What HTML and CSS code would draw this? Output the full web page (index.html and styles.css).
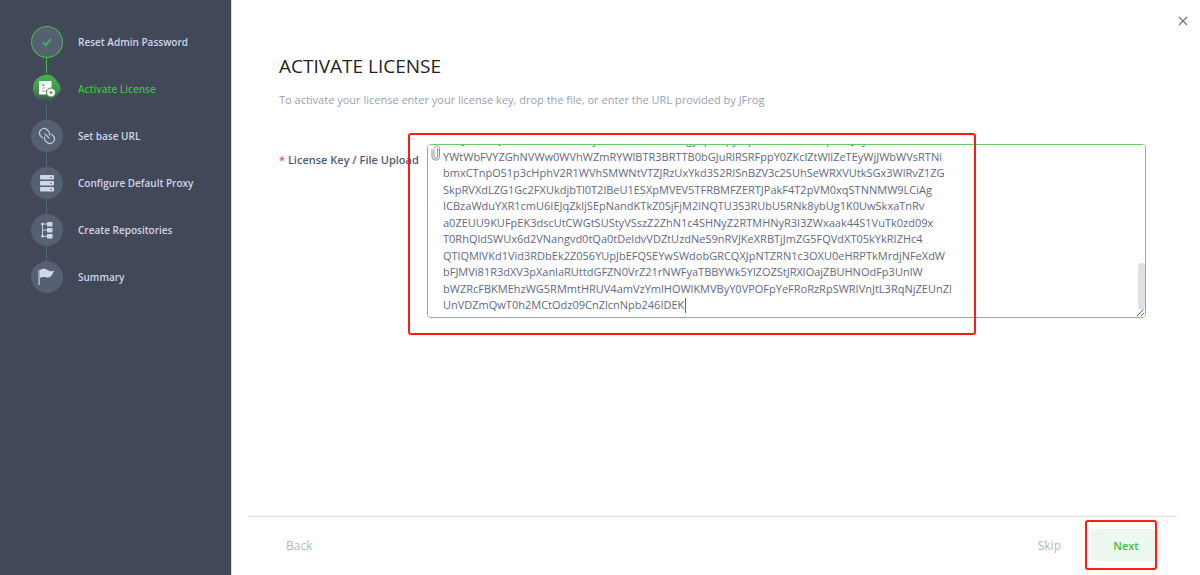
FILE: index.html
```html
<!DOCTYPE html>
<html lang="en">
<head>
    <meta charset="UTF-8">
    <meta name="viewport" content="width=device-width, initial-scale=1.0">
    <title>Activate License</title>
    <link rel="stylesheet" href="styles.css">
</head>
<body>
    <!-- Wizard steps -->
    <aside class="sidebar">
        <ol class="steps">
            <li class="step done">
                <span class="step-icon">
                    <svg width="32" height="32" viewBox="0 0 32 32"><path d="M12 16.500l2.800 2.800 5.200-6.300" fill="none" stroke="#40be46" stroke-width="1.700"/></svg>
                </span>
                <span class="step-name">Reset Admin Password</span>
            </li>
            <li class="step active">
                <span class="step-icon">
                    <svg width="32" height="32" viewBox="0 0 32 32">
                        <defs>
                            <linearGradient id="blob" x1="0" y1="0" x2="0" y2="1">
                                <stop offset="0" stop-color="#43b649"/>
                                <stop offset="0.5" stop-color="#439a4c"/>
                                <stop offset="1" stop-color="#414857"/>
                            </linearGradient>
                        </defs>
                        <path d="M14 2c6-1 9 2 12 6 4 5 5 8 2 12-4 5-8 10-14 9C6 28 2 23 2 15 2 8 7 3 14 2z" fill="url(#blob)"/>
                        <path d="M8 8h12.500v10l-4 3.500H8z" fill="#fff"/>
                        <path d="M11 18h5M11 15h3" stroke="#8fae91" stroke-width="1"/>
                        <circle cx="12.500" cy="12" r="1" fill="#439a4c"/>
                        <circle cx="20" cy="19.500" r="4.500" fill="#fff" stroke="#43814d" stroke-width="1"/>
                        <path d="M20 17.800v3.400M18.300 19.500h3.400" stroke="#43a04a" stroke-width="1.200"/>
                    </svg>
                </span>
                <span class="step-name">Activate License</span>
            </li>
            <li class="step">
                <span class="step-icon">
                    <svg width="32" height="32" viewBox="0 0 32 32" fill="none" stroke="#c5cbe3" stroke-width="1.200" stroke-linecap="round"><path d="M11.500 17.800l-2-2a4.500 4.500 0 0 1 6.300-6.300l1.700 1.700a4.500 4.500 0 0 1 1 4M20.500 14.200l2 2a4.500 4.500 0 0 1-6.300 6.300l-1.700-1.700a4.500 4.500 0 0 1-1-4M14 14l4 4"/></svg>
                </span>
                <span class="step-name">Set base URL</span>
            </li>
            <li class="step">
                <span class="step-icon">
                    <svg width="32" height="32" viewBox="0 0 32 32">
                        <g fill="#d0d5ec"><rect x="9" y="8" width="14" height="4.500" rx="1"/><rect x="9" y="14" width="14" height="4.500" rx="1"/><rect x="9" y="20" width="14" height="4.500" rx="1"/></g>
                        <g fill="#556172"><circle cx="20" cy="10.200" r=".8"/><circle cx="20" cy="16.200" r=".8"/><circle cx="20" cy="22.200" r=".8"/></g>
                    </svg>
                </span>
                <span class="step-name">Configure Default Proxy</span>
            </li>
            <li class="step">
                <span class="step-icon">
                    <svg width="32" height="32" viewBox="0 0 32 32">
                        <path d="M11.500 9v13.500M10 10h7M11.500 16h5M11.500 22.300h5" fill="none" stroke="#c5cbe3" stroke-width="1"/>
                        <g fill="#d0d5ec"><rect x="16" y="8" width="5.500" height="4.500" rx=".6"/><rect x="16" y="14" width="5.500" height="4.500" rx=".6"/><rect x="16" y="20" width="5.500" height="4.500" rx=".6"/><circle cx="11.500" cy="10" r="1.300"/><circle cx="11.500" cy="22.300" r="1.300"/></g>
                    </svg>
                </span>
                <span class="step-name">Create Repositories</span>
            </li>
            <li class="step">
                <span class="step-icon">
                    <svg width="32" height="32" viewBox="0 0 32 32" fill="#d0d5ec"><path d="M7.500 9h1.200v15H7.500zM9 9c3-2 6-1.300 8 .3 2 1.300 4 1 6 .2-1 3.500-3 7-6 7-3 0-5-1.500-8 .5z"/></svg>
                </span>
                <span class="step-name">Summary</span>
            </li>
        </ol>
    </aside>

    <!-- Current step -->
    <main class="main">
        <button type="button" class="close-btn" aria-label="Close">
            <svg width="10" height="10" viewBox="0 0 10 10"><path d="M1 1l8 8M9 1L1 9" stroke="#6f7480" stroke-width="1.200"/></svg>
        </button>
        <form class="wizard" action="#" method="post">
            <div class="content">
                <h1>ACTIVATE LICENSE</h1>
                <p class="description">To activate your license enter your license key, drop the file, or enter the URL provided by JFrog</p>
                <div class="form-group">
                    <label for="license"><span class="required">*</span> License Key / File Upload</label>
                    <div class="field">
                        <textarea id="license" name="license" spellcheck="false">






















WXlJMk5EQmhNVWw0WVhWyZmRYWlBTR3BRTgyZpKclpyWpRTNiVhSMWNpVTZJRyNN
YWtWbFVYZGhNVWw0WVhWZmRYWlBTR3BRTTB0bGJuRlRSRFppY0ZKclZtWllZeTEyWjJWbWVsRTNi
bmxCTnpOS1p3cHphV2R1WVhSMWNtVTZJRzUxYkd3S2RISnBZV3c2SUhSeWRXVUtkSGx3WlRvZ1ZG
SkpRVXdLZG1Gc2FXUkdjbTl0T2lBeU1ESXpMVEV5TFRBMFZERTJPakF4T2pVM0xqSTNNMW9LCiAg
ICBzaWduYXR1cmU6IEJqZkljSEpNandKTkZ0SjFjM2lNQTU3S3RUbU5RNk8ybUg1K0UwSkxaTnRv
a0ZEUU9KUFpEK3dscUtCWGtSUStyVSszZ2ZhN1c4SHNyZ2RTMHNyR3I3ZWxaak44S1VuTk0zd09x
T0RhQldSWUx6d2VNangvd0tQa0tDeldvVDZtUzdNeS9nRVJKeXRBTjJmZG5FQVdXT05kYkRIZHc4
QTlQMlVKd1Vid3RDbEk2Z056YUpJbEFQSEYwSWdobGRCQXJpNTZRN1c3OXU0eHRPTkMrdjNFeXdW
bFJMVi81R3dXV3pXanlaRUttdGFZN0VrZ21rNWFyaTBBYWk5YlZOZStJRXlOajZBUHNOdFp3UnlW
bWZRcFBKMEhzWG5RMmtHRUV4amVzYmlHOWlKMVByY0VPOFpYeFRoRzRpSWRIVnJtL3RqNjZEUnZl
UnVDZmQwT0h2MCtOdz09CnZlcnNpb246IDEK</textarea>
                        <svg class="clip" width="10" height="16" viewBox="0 0 10 16"><path d="M3 4.500v7a1.800 1.800 0 0 0 3.600 0V3.200M1 4v7.500a3.700 3.700 0 0 0 7.500 0V3.500C8.500 0 3.500 0 3.500 3.500" fill="none" stroke="#8a8f98" stroke-width="1"/></svg>
                        <div class="scroll-thumb"></div>
                        <div class="caret"></div>
                        <div class="highlight highlight-key"></div>
                    </div>
                </div>
            </div>
            <div class="footer">
                <button type="button" class="btn back">Back</button>
                <button type="button" class="btn skip">Skip</button>
                <div class="next-wrap">
                    <button type="submit" class="btn next">Next</button>
                    <div class="highlight highlight-next"></div>
                </div>
            </div>
        </form>
    </main>

    <script>
        // keep the end of the pasted key in view
        const license = document.getElementById("license");
        license.focus();
        license.setSelectionRange(license.value.length, license.value.length);
        license.scrollTop = license.scrollHeight;
    </script>
</body>
</html>
```
FILE: styles.css
```css
* {
    margin: 0;
    padding: 0;
    box-sizing: border-box;
}

body {
    font-family: "Open Sans", "Noto Sans", sans-serif;
    font-size: 12px;
    background-color: #fff;
    display: flex;
    min-height: 100vh;
}

/* Sidebar */
.sidebar {
    width: 232px;
    flex-shrink: 0;
    background-color: #414857;
    border-right: 1px solid #d5d8dd;
    padding: 26px 31px;
}

.steps {
    list-style: none;
    display: flex;
    flex-direction: column;
    gap: 15px;
}

.step {
    display: flex;
    align-items: center;
    gap: 15px;
    position: relative;
    color: #d0d5ec;
    font-size: 10px;
    line-height: 16px;
    font-weight: 600;
    white-space: nowrap;
}

/* line down to the next step */
.step:not(:last-child)::after {
    content: "";
    position: absolute;
    left: 15px;
    top: 32px;
    width: 1px;
    height: 15px;
    background-color: #556575;
}

.step.done::after {
    background-color: #40be46;
}

.step-icon {
    width: 32px;
    height: 32px;
    border-radius: 50%;
    background-color: #556172;
}

.step-icon svg {
    display: block;
}

.done .step-icon {
    box-shadow: inset 0 0 0 1px #40be46;
}

.active .step-icon {
    background: none;
}

.active .step-name {
    color: #40be46;
}

/* Main area */
.main {
    flex: 1;
    position: relative;
    display: flex;
}

.close-btn {
    position: absolute;
    top: 16px;
    right: 12px;
    width: 10px;
    height: 10px;
    border: none;
    background: none;
    cursor: pointer;
}

.close-btn svg {
    display: block;
}

.wizard {
    flex: 1;
    display: flex;
    flex-direction: column;
}

.content {
    flex: 1;
    padding: 52px 54px 0 47px;
}

h1 {
    font-size: 19px;
    font-weight: 400;
    line-height: 28px;
    color: #222;
}

.description {
    margin-top: 12px;
    font-size: 11px;
    line-height: 16px;
    color: #9a9fb3;
}

.form-group {
    display: flex;
    align-items: flex-start;
    margin-top: 36px;
}

.form-group label {
    width: 148px;
    flex-shrink: 0;
    padding-top: 8px;
    font-size: 11px;
    line-height: 16px;
    font-weight: 600;
    color: #545b6e;
    white-space: nowrap;
}

.required {
    color: #f0504a;
}

.field {
    flex: 1;
    position: relative;
}

.field textarea {
    display: block;
    width: 100%;
    height: 174px;
    padding: 3px 15px;
    border: 1px solid #6cc971;
    border-radius: 4px;
    outline: none;
    resize: vertical;
    overflow-y: scroll;
    white-space: pre;
    font-family: inherit;
    font-size: 11px;
    line-height: 1.5;
    color: #646a7e;
    caret-color: transparent;
    scrollbar-width: none;
}

.clip {
    position: absolute;
    left: 4px;
    top: 1px;
    background-color: #fff;
}

.scroll-thumb {
    position: absolute;
    right: 1px;
    bottom: 8px;
    width: 7px;
    height: 47px;
    border-radius: 4px;
    background-color: #e0e0e0;
}

.caret {
    position: absolute;
    left: 258px;
    bottom: 5px;
    width: 1px;
    height: 15px;
    background-color: #646a7e;
}

/* Red marker frames */
.highlight {
    position: absolute;
    border: 2px solid #fb1e14;
    border-radius: 3px;
    pointer-events: none;
}

.highlight-key {
    left: -19px;
    top: -11px;
    width: 568px;
    height: 202px;
}

.highlight-next {
    left: -6px;
    top: -9px;
    width: 72px;
    height: 50px;
}

/* Footer buttons */
.footer {
    display: flex;
    align-items: center;
    height: 59px;
    margin: 0 23px 0 16px;
    padding: 0 16px 2px 24px;
    border-top: 1px solid #dcdde0;
}

.btn {
    height: 32px;
    padding: 0 14px;
    border: none;
    border-radius: 3px;
    background: none;
    font-family: inherit;
    font-size: 12px;
    color: #b4b8c2;
    cursor: pointer;
}

.back {
    margin-right: auto;
}

.skip {
    margin-right: 16px;
}

.next-wrap {
    position: relative;
}

.next {
    width: 70px;
    background-color: #ecf8ed;
    color: #40be46;
    font-size: 11px;
    font-weight: 600;
}
```
